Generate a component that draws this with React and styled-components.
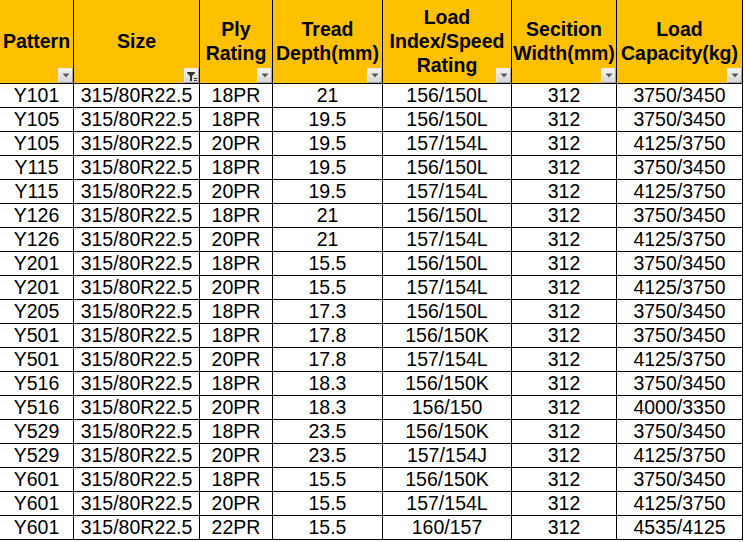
import styled, { createGlobalStyle } from 'styled-components'

const GlobalStyle = createGlobalStyle`
  html, body {
    margin: 0;
    padding: 0;
    background: #fff;
  }
  body {
    font-family: "Liberation Sans", Arial, sans-serif;
    color: #000;
  }
`

const widths = [74, 126, 73, 110, 129, 105, 126]

const Sheet = styled.div`
  display: grid;
  grid-template-columns: ${widths.map(w => `${w}px`).join(' ')};
  grid-template-rows: 84px;
  grid-auto-rows: 24px;
  width: 743px;
`

const HeadCell = styled.div`
  position: relative;
  box-sizing: border-box;
  background: #ffc000;
  border-right: 1px solid #000;
  border-bottom: 1px solid #000;
  display: flex;
  align-items: center;
  justify-content: center;
  text-align: center;
  font-weight: bold;
  font-size: 19.5px;
  line-height: 24px;
  padding-bottom: 1px;
  white-space: nowrap;
`

const Cell = styled.div`
  box-sizing: border-box;
  border-right: 1px solid #000;
  border-bottom: 1px solid #000;
  display: flex;
  align-items: center;
  justify-content: center;
  font-size: 19.5px;
  line-height: 23px;
  white-space: nowrap;
`

const FilterButton = styled.span`
  position: absolute;
  right: 0;
  bottom: 0;
  width: 15px;
  height: 15px;
  box-sizing: border-box;
  background: linear-gradient(#f4f4f4, #d6d6d6);
  border: 1px solid #a6a6a6;
  border-top-color: #e8e8e8;
  border-left-color: #e8e8e8;
  display: flex;
  align-items: center;
  justify-content: center;
  > svg {
    display: block;
  }
`

const Arrow = () => (
  <svg width="8" height="5" viewBox="0 0 8 5">
    <polygon points="0.5,0.5 7.5,0.5 4,4.5" fill="#5a5a5a" />
  </svg>
)

const Funnel = () => (
  <svg width="12" height="12" viewBox="0 0 12 12">
    <polygon points="1,2 9,2 9,3 6,6 6,11 4,11 4,6 1,3" fill="#333" />
    <rect x="8" y="8" width="3" height="1" fill="#333" />
    <rect x="8" y="10" width="3" height="1" fill="#333" />
  </svg>
)

const headers = [
  ['Pattern'],
  ['Size'],
  ['Ply', 'Rating'],
  ['Tread', 'Depth(mm)'],
  ['Load', 'Index/Speed', 'Rating'],
  ['Secition', 'Width(mm)'],
  ['Load', 'Capacity(kg)'],
]

const rows = [
  ['Y101', '18PR', '21', '156/150L', '3750/3450'],
  ['Y105', '18PR', '19.5', '156/150L', '3750/3450'],
  ['Y105', '20PR', '19.5', '157/154L', '4125/3750'],
  ['Y115', '18PR', '19.5', '156/150L', '3750/3450'],
  ['Y115', '20PR', '19.5', '157/154L', '4125/3750'],
  ['Y126', '18PR', '21', '156/150L', '3750/3450'],
  ['Y126', '20PR', '21', '157/154L', '4125/3750'],
  ['Y201', '18PR', '15.5', '156/150L', '3750/3450'],
  ['Y201', '20PR', '15.5', '157/154L', '4125/3750'],
  ['Y205', '18PR', '17.3', '156/150L', '3750/3450'],
  ['Y501', '18PR', '17.8', '156/150K', '3750/3450'],
  ['Y501', '20PR', '17.8', '157/154L', '4125/3750'],
  ['Y516', '18PR', '18.3', '156/150K', '3750/3450'],
  ['Y516', '20PR', '18.3', '156/150', '4000/3350'],
  ['Y529', '18PR', '23.5', '156/150K', '3750/3450'],
  ['Y529', '20PR', '23.5', '157/154J', '4125/3750'],
  ['Y601', '18PR', '15.5', '156/150K', '3750/3450'],
  ['Y601', '20PR', '15.5', '157/154L', '4125/3750'],
  ['Y601', '22PR', '15.5', '160/157', '4535/4125'],
]

const App = () => (
  <>
    <GlobalStyle />
    <Sheet>
      {headers.map((lines, i) => (
        <HeadCell key={i}>
          <span>
            {lines.map((l, j) => (
              <div key={j}>{l}</div>
            ))}
          </span>
          <FilterButton>{i === 1 ? <Funnel /> : <Arrow />}</FilterButton>
        </HeadCell>
      ))}
      {rows.map(([pattern, ply, tread, load, capacity], r) =>
        [pattern, '315/80R22.5', ply, tread, load, '312', capacity].map((v, c) => (
          <Cell key={`${r}-${c}`}>{v}</Cell>
        ))
      )}
    </Sheet>
  </>
)

export default App
